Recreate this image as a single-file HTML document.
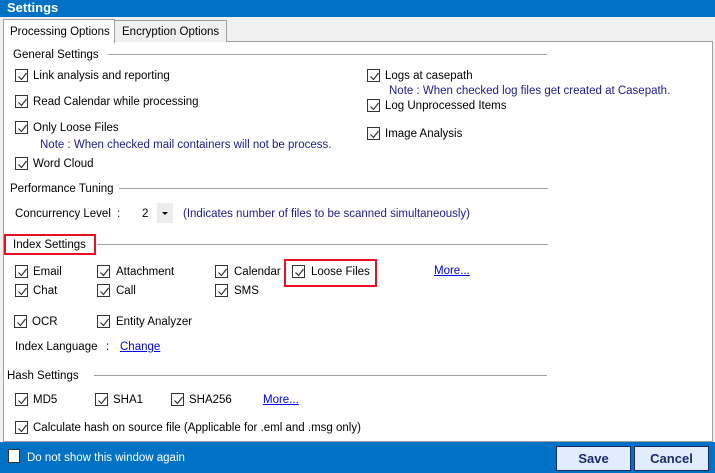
<!DOCTYPE html>
<html><head><meta charset="utf-8"><style>
*{margin:0;padding:0;box-sizing:border-box}
body{width:715px;height:473px;overflow:hidden;background:#f0f0f0;font-family:"Liberation Sans",sans-serif;font-size:11.5px;color:#000;position:relative}
.a{position:absolute;white-space:nowrap;line-height:14px;margin-top:1px}
.cb{position:absolute;width:13px;height:13px;border:1px solid #333;background:#fff}
.cb svg{position:absolute;left:1px;top:1px}
.hl{position:absolute;height:1px;background:#a0a0a0}
.note{color:#1c1c8c}
.lnk{color:#0000ee;text-decoration:underline}
.red{position:absolute;border:2px solid #e81123}
.btn{position:absolute;top:446px;height:25px;background:#e1ecfc;border:1px solid #1a2a6c;color:#1a2a6c;font-weight:bold;font-size:13px;text-align:center;line-height:23px}
</style></head><body>
<div style="position:absolute;left:0;top:0;width:715px;height:17px;background:#0072c6"></div>
<div class="a" style="left:7px;top:0px;color:#fff;font-weight:bold;font-size:13px">Settings</div>
<div style="position:absolute;left:3px;top:41px;width:710px;height:401px;background:#fff;border:1px solid #a0a0a0"></div>
<div style="position:absolute;left:114px;top:20px;width:113px;height:22px;background:#f0f0f0;border:1px solid #a0a0a0;border-bottom:none"></div>
<div style="position:absolute;left:3px;top:19px;width:112px;height:24px;background:#fff;border:1px solid #a0a0a0;border-bottom:none"></div>
<div class="a" style="left:10px;top:24px">Processing Options</div>
<div class="a" style="left:122px;top:24px">Encryption Options</div>

<div class="a" style="left:13px;top:47px">General Settings</div><div class="hl" style="left:108px;top:54px;width:439px"></div>
<div class="a" style="left:10px;top:181px">Performance Tuning</div><div class="hl" style="left:119px;top:188px;width:429px"></div>
<div class="a" style="left:13px;top:237px">Index Settings</div><div class="hl" style="left:97px;top:244px;width:451px"></div>
<div class="red" style="left:4px;top:234px;width:92px;height:21px"></div>
<div class="a" style="left:7px;top:368px">Hash Settings</div><div class="hl" style="left:94px;top:375px;width:453px"></div>

<div id="cbs"></div>
<div class="a" style="left:33px;top:68px">Link analysis and reporting</div>
<div class="a" style="left:33px;top:94px">Read Calendar while processing</div>
<div class="a" style="left:33px;top:120px">Only Loose Files</div>
<div class="a note" style="left:40px;top:137px">Note : When checked mail containers will not be process.</div>
<div class="a" style="left:33px;top:156px">Word Cloud</div>
<div class="a" style="left:385px;top:68px">Logs at casepath</div>
<div class="a note" style="left:389px;top:83px">Note : When checked log files get created at Casepath.</div>
<div class="a" style="left:385px;top:98px">Log Unprocessed Items</div>
<div class="a" style="left:385px;top:126px">Image Analysis</div>

<div class="a" style="left:15px;top:206px">Concurrency Level</div>
<div class="a" style="left:115px;top:206px;background:#fff;padding-left:2px">:</div>
<div class="a" style="left:142px;top:206px">2</div>
<div style="position:absolute;left:157px;top:203px;width:16px;height:20px;background:#ececec"></div>
<div style="position:absolute;left:162px;top:212px;border-left:3px solid transparent;border-right:3px solid transparent;border-top:3px solid #000"></div>
<div class="a note" style="left:183px;top:206px">(Indicates number of files to be scanned simultaneously)</div>

<div class="a" style="left:33px;top:264px">Email</div>
<div class="a" style="left:116px;top:264px">Attachment</div>
<div class="a" style="left:234px;top:264px">Calendar</div>
<div class="a" style="left:311px;top:264px">Loose Files</div>
<div class="red" style="left:284px;top:259px;width:93px;height:28px"></div>
<div class="a lnk" style="left:434px;top:263px">More...</div>
<div class="a" style="left:33px;top:283px">Chat</div>
<div class="a" style="left:116px;top:283px">Call</div>
<div class="a" style="left:234px;top:283px">SMS</div>
<div class="a" style="left:32px;top:314px">OCR</div>
<div class="a" style="left:116px;top:314px">Entity Analyzer</div>
<div class="a" style="left:15px;top:339px">Index Language</div>
<div class="a" style="left:104px;top:339px;background:#fff;padding-left:2px">:</div>
<div class="a lnk" style="left:120px;top:339px">Change</div>

<div class="a" style="left:33px;top:392px">MD5</div>
<div class="a" style="left:113px;top:392px">SHA1</div>
<div class="a" style="left:189px;top:392px">SHA256</div>
<div class="a lnk" style="left:263px;top:392px">More...</div>
<div class="a" style="left:33px;top:420px">Calculate hash on source file (Applicable for .eml and .msg only)</div>

<div style="position:absolute;left:0;top:442px;width:715px;height:31px;background:#0072c6"></div>
<div style="position:absolute;left:8px;top:449px;width:12px;height:14px;background:#fff;border:1px solid #333"></div>
<div class="a" style="left:27px;top:450px;color:#fff">Do not show this window again</div>
<div class="btn" style="left:556px;width:75px">Save</div>
<div class="btn" style="left:634px;width:75px">Cancel</div>

<script>
var p=[[15,69],[15,95],[15,121],[15,157],[367,69],[367,99],[367,127],[15,265],[97,265],[215,265],[292,265],[15,284],[97,284],[215,284],[14,315],[97,315],[15,393],[95,393],[171,393],[15,421]];
var h='';p.forEach(function(q){h+='<div class="cb" style="left:'+q[0]+'px;top:'+q[1]+'px"><svg width="11" height="11"><path d="M1.5 5.5 L4.5 8.5 L9.5 2" fill="none" stroke="#333" stroke-width="1.2"/></svg></div>'});
document.getElementById('cbs').innerHTML=h;
</script>
</body></html>
